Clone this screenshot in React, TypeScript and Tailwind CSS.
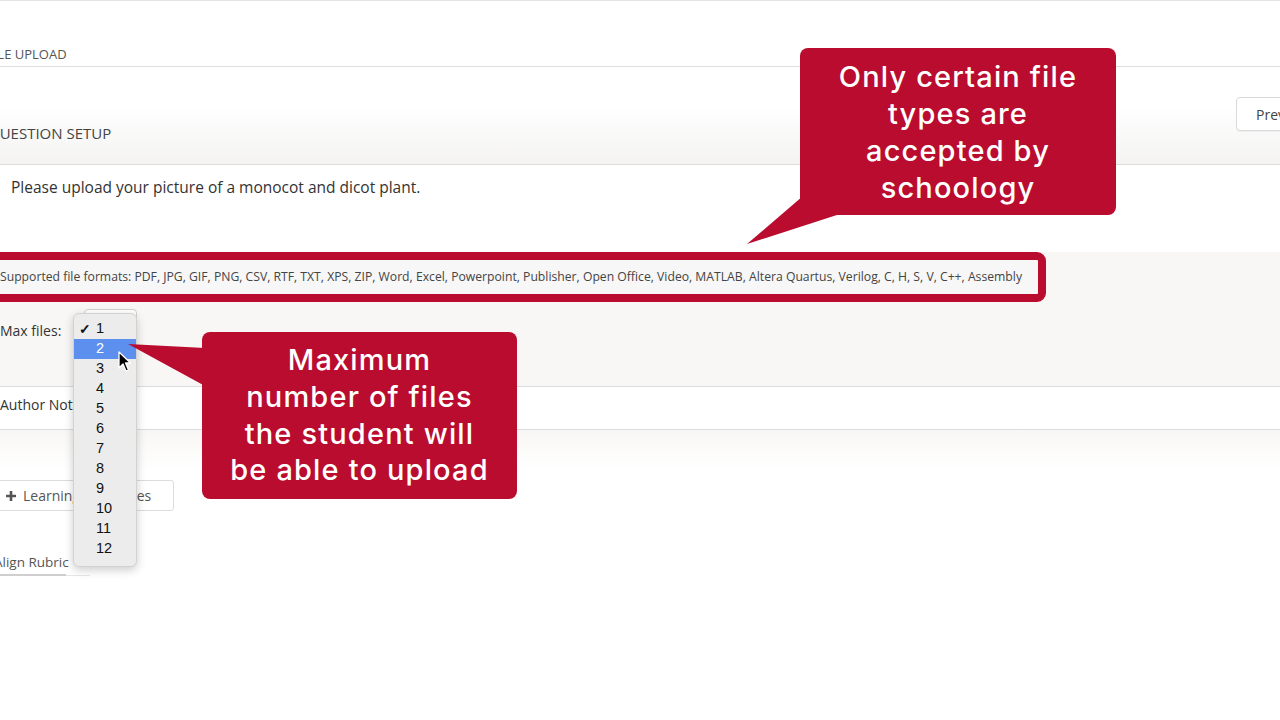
import React from "react";

const RED = "#ba0c2f";

function Callout({
  lines,
  className,
}: {
  lines: string[];
  className: string;
}) {
  return (
    <div
      className={`absolute flex flex-col items-center justify-center rounded-[8px] bg-[#ba0c2f] text-white font-['Inter',sans-serif] font-medium tracking-[0.04em] ${className}`}
    >
      {lines.map((l) => (
        <div key={l} className="whitespace-nowrap">
          {l}
        </div>
      ))}
    </div>
  );
}

export default function App() {
  const nums = Array.from({ length: 12 }, (_, i) => i + 1);
  return (
    <div className="relative w-[1280px] h-[720px] overflow-hidden bg-white font-['Open_Sans',sans-serif] text-[#333]">
      <div className="border-t border-[#e4e4e4]">
        {/* FILE UPLOAD header */}
        <div className="h-[66px] flex items-end pb-[3px] border-b border-[#dedede]">
          <span className="-ml-[13px] text-[13px] leading-[18px] text-[#555]">
            FILE UPLOAD
          </span>
        </div>

        {/* QUESTION SETUP */}
        <div className="relative h-[98px] border-b border-[#dcdcdc] bg-gradient-to-b from-white from-40% to-[#f4f3f2]">
          <div className="pt-[56px] -ml-[12px] text-[15px] leading-[20px] font-medium text-[#444]">
            QUESTION SETUP
          </div>
          <div className="absolute left-[1236px] top-[30px] h-[34px] flex items-center pl-[19px] pr-[20px] bg-white border border-[#dadada] rounded-[4px] text-[14px] text-[#444] shadow-[0_1px_1px_rgba(0,0,0,0.05)]">
            Preview
          </div>
        </div>

        {/* Question text */}
        <div className="h-[87px] pt-[11px] pl-[11px] text-[15.5px] leading-[22px] text-[#333]">
          Please upload your picture of a monocot and dicot plant.
        </div>

        {/* Options area */}
        <div className="h-[135px] bg-[#f8f7f5] border-b border-[#dcdcdc]">
          <div className="-ml-[20px] w-[1066px] h-[50px] border-[8px] border-[#ba0c2f] rounded-[9px] bg-[#f7f7f7] flex items-center pl-[12px] text-[12.2px] text-[#444] whitespace-nowrap overflow-hidden">
            Supported file formats: PDF, JPG, GIF, PNG, CSV, RTF, TXT, XPS, ZIP, Word, Excel, Powerpoint, Publisher, Open Office, Video, MATLAB, Altera Quartus, Verilog, C, H, S, V, C++, Assembly
          </div>
          <div className="relative pt-[19px] flex items-center">
            <span className="text-[14px] leading-[20px] text-[#333]">Max files:</span>
          </div>
        </div>

        {/* Author notes */}
        <div className="h-[43px] pt-[8px] border-b border-[#dcdcdc] bg-white">
          <div className="text-[14px] leading-[20px] text-[#333]">Author Notes</div>
        </div>

        {/* fade */}
        <div className="h-[40px] bg-gradient-to-b from-[#f8f7f5] to-white" />

        {/* Learning Objectives */}
        <div className="pt-[10px]">
          <div className="-ml-[10px] inline-flex items-center gap-[6px] h-[31px] pl-[14px] pr-[22px] bg-white border border-[#dcdcdc] rounded-[3px] text-[14px] text-[#555]">
            <svg width="12" height="12" viewBox="0 0 12 12">
              <path d="M6 1 V11 M1 6 H11" stroke="#555" strokeWidth="2.6" />
            </svg>
            <span>Learning Objectives</span>
          </div>
        </div>

        {/* Align Rubric */}
        <div className="pt-[38px]">
          <div className="inline-block -ml-[6px] text-[13.5px] leading-[20px] text-[#555]">
            Align Rubric
          </div>
          <div className="flex h-[2px] mt-[1px]">
            <div className="w-[66px] bg-[#cfcfcf]" />
            <div className="w-[24px] bg-[#e6e6e6] h-[1px] mt-[1px]" />
          </div>
        </div>
      </div>

      {/* select box behind popup */}
      <div className="absolute left-[84px] top-[309px] w-[53px] h-[26px] rounded-[4px] border border-[#cfcfcf] bg-white" />

      {/* Dropdown popup */}
      <div className="absolute left-[73px] top-[313px] w-[64px] pt-[5px] pb-[7px] rounded-[6px] bg-[#ececec] border border-[#d2d2d2] shadow-[0_3px_10px_rgba(0,0,0,0.2)] font-['Liberation_Sans',Arial,sans-serif] text-[14.5px] text-[#111]">
        {nums.map((n) => (
          <div
            key={n}
            className={`relative h-[20px] flex items-center pl-[22px] ${
              n === 2 ? "bg-[#5d90ee] text-white" : ""
            }`}
          >
            {n === 1 && (
              <span className="absolute left-[5px] text-[14px] font-bold">✓</span>
            )}
            {n}
          </div>
        ))}
      </div>

      {/* Callout tails */}
      <svg className="absolute left-0 top-0" width="1280" height="720" style={{ pointerEvents: "none" }}>
        <polygon points="803,196 840,214 747,244" fill={RED} />
        <polygon points="128,344 205,348 205,386" fill={RED} />
      </svg>
      <Callout
        className="left-[800px] top-[48px] w-[316px] h-[167px] text-[29px] leading-[37px]"
        lines={["Only certain file", "types are", "accepted by", "schoology"]}
      />
      <Callout
        className="left-[202px] top-[332px] w-[315px] h-[167px] text-[29px] leading-[36.7px]"
        lines={["Maximum", "number of files", "the student will", "be able to upload"]}
      />

      {/* Cursor */}
      <svg className="absolute left-[118px] top-[351px]" width="14" height="22" viewBox="0 0 14 22">
        <path d="M1 1 L1 17 L5 13 L8 20 L10.5 19 L7.5 12 L12.5 12 Z" fill="#000" stroke="#fff" strokeWidth="1.3" strokeLinejoin="round" />
      </svg>
    </div>
  );
}
